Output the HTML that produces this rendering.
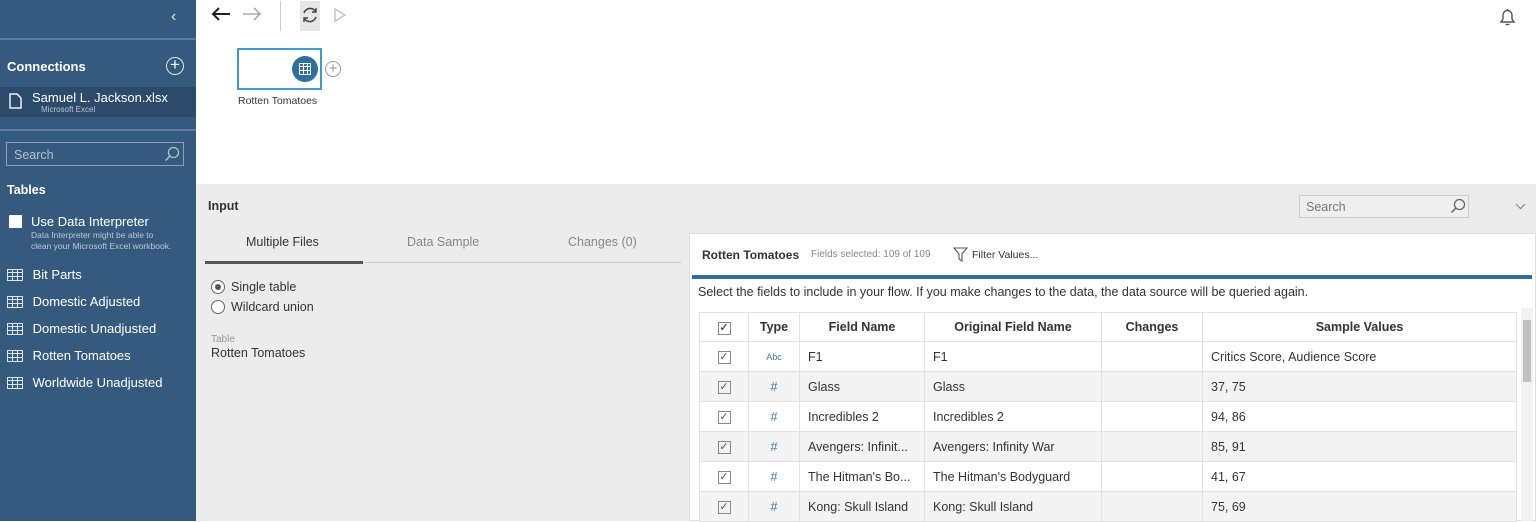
<!DOCTYPE html>
<html><head><style>
*{margin:0;padding:0;box-sizing:border-box}
body{width:1536px;height:521px;overflow:hidden;font-family:"Liberation Sans",sans-serif;background:#fff;position:relative;color:#333}
.a{position:absolute}
.sb{left:0;top:0;width:196px;height:521px;background:#365a7e;color:#fff}
.tb{font-size:13px;color:#fff}
.ic{display:inline-block;width:16px;height:12px;border:1.5px solid #dde6ef;background:repeating-linear-gradient(90deg,transparent 0 4px,#dde6ef 4px 5px),repeating-linear-gradient(0deg,transparent 0 3px,#dde6ef 3px 4px)}
td,th{border:1px solid #e2e2e2;height:30px;font-size:12.5px;padding:0 8px;white-space:nowrap;overflow:hidden}
th{font-weight:bold;height:29px}
tr:nth-child(odd) td{background:#f3f3f3}
.cb{display:inline-block;width:13px;height:13px;border:1px solid #888;font-size:11px;line-height:11px;text-align:center;color:#555}
</style></head><body>
<div class="a sb">
 <div class="a" style="left:171px;top:8px;font-size:16px;color:#dfe6ee">&#8249;</div>
 <div class="a" style="left:0;top:38px;width:196px;height:2px;background:#5b7b9c"></div>
 <div class="a" style="left:7px;top:59px;font-size:13px;font-weight:bold">Connections</div>
 <div class="a" style="left:166px;top:57px;width:18px;height:18px;border:1.5px solid #dfe6ee;border-radius:50%;text-align:center;line-height:14px;font-size:17px">+</div>
 <div class="a" style="left:0;top:87px;width:196px;height:30px;background:#2c4a6a"></div>
 <svg class="a" style="left:9px;top:93px" width="13" height="16"><path d="M1 1H8L12 5V15H1Z" fill="none" stroke="#eef" stroke-width="1.5"/></svg>
 <div class="a" style="left:32px;top:90px;font-size:13px">Samuel L. Jackson.xlsx</div>
 <div class="a" style="left:41px;top:105px;font-size:8px;color:#b8c7d6">Microsoft Excel</div>
 <div class="a" style="left:0;top:129px;width:196px;height:2px;background:#5b7b9c"></div>
 <div class="a" style="left:6px;top:142px;width:178px;height:24px;border:1px solid #8aa2bb"></div>
 <div class="a" style="left:14px;top:148px;font-size:12.5px;color:#b0c1d3">Search</div>
 <svg class="a" style="left:164px;top:146px" width="16" height="16"><circle cx="9.5" cy="6.5" r="5" fill="none" stroke="#b0c1d3" stroke-width="1.3"/><path d="M6 10L1.5 14.5" stroke="#b0c1d3" stroke-width="1.5"/></svg>
 <div class="a" style="left:7px;top:183px;font-size:12.5px;font-weight:bold">Tables</div>
 <div class="a" style="left:9px;top:215px;width:13px;height:13px;background:#fff"></div>
 <div class="a" style="left:31px;top:214px;font-size:13px">Use Data Interpreter</div>
 <div class="a" style="left:31px;top:230px;font-size:8.5px;color:#b8c7d6;line-height:11px">Data Interpreter might be able to<br>clean your Microsoft Excel workbook.</div>
 <div class="a tb" style="left:7px;top:269px"><span class="ic"></span> <span style="position:relative;top:-2px;left:6px">Bit Parts</span></div>
 <div class="a tb" style="left:7px;top:296px"><span class="ic"></span> <span style="position:relative;top:-2px;left:6px">Domestic Adjusted</span></div>
 <div class="a tb" style="left:7px;top:323px"><span class="ic"></span> <span style="position:relative;top:-2px;left:6px">Domestic Unadjusted</span></div>
 <div class="a tb" style="left:7px;top:350px"><span class="ic"></span> <span style="position:relative;top:-2px;left:6px">Rotten Tomatoes</span></div>
 <div class="a tb" style="left:7px;top:377px"><span class="ic"></span> <span style="position:relative;top:-2px;left:6px">Worldwide Unadjusted</span></div>
</div>
<!-- toolbar -->
<svg class="a" style="left:211px;top:6px" width="20" height="16"><path d="M19 8H2M8 2L2 8L8 14" fill="none" stroke="#222" stroke-width="2"/></svg>
<svg class="a" style="left:242px;top:6px" width="20" height="16"><path d="M1 8H18M12 2L18 8L12 14" fill="none" stroke="#aaa" stroke-width="1.6"/></svg>
<div class="a" style="left:280px;top:1px;width:1px;height:30px;background:#ccc"></div>
<div class="a" style="left:300px;top:1px;width:20px;height:30px;background:#e6e6e6"></div>
<svg class="a" style="left:301px;top:6px" width="18" height="18"><path d="M3 7A6.5 6.5 0 0 1 15 6M15 11A6.5 6.5 0 0 1 3 12" fill="none" stroke="#444" stroke-width="1.6"/><path d="M15 2V6H11M3 16V12H7" fill="none" stroke="#444" stroke-width="1.4"/></svg>
<svg class="a" style="left:334px;top:8px" width="12" height="14"><path d="M1 1L11 7L1 13Z" fill="none" stroke="#bbb" stroke-width="1.3"/></svg>
<svg class="a" style="left:1498px;top:7px" width="19" height="20"><path d="M3 15H16L14 12V8A4.5 4.5 0 0 0 5 8V12Z" fill="none" stroke="#555" stroke-width="1.4"/><path d="M7.5 17.5H11.5" stroke="#555" stroke-width="1.4"/><path d="M9.5 2V3.5" stroke="#555" stroke-width="1.4"/></svg>
<div class="a" style="left:237px;top:48px;width:85px;height:42px;border:2px solid #3c9ad6;background:#fff"></div>
<div class="a" style="left:292px;top:56px;width:26px;height:26px;border-radius:50%;background:#2f6f9f"></div>
<div class="a" style="left:299px;top:63px;width:12px;height:12px;border:1px solid #fff;background:repeating-linear-gradient(90deg,transparent 0 3px,#fff 3px 4px),repeating-linear-gradient(0deg,transparent 0 3px,#fff 3px 4px)"></div>
<div class="a" style="left:325px;top:61px;width:16px;height:16px;border:1px solid #999;border-radius:50%;text-align:center;line-height:13px;color:#999;font-size:15px">+</div>
<div class="a" style="left:238px;top:95px;font-size:10.5px">Rotten Tomatoes</div>
<!-- lower -->
<div class="a" style="left:196px;top:184px;width:1340px;height:337px;background:#ececec"></div>
<div class="a" style="left:208px;top:199px;font-size:12.5px;font-weight:bold">Input</div>
<div class="a" style="left:1299px;top:195px;width:170px;height:23px;border:1px solid #ccc;background:#efefef"></div>
<div class="a" style="left:1306px;top:200px;font-size:12.5px;color:#777">Search</div>
<svg class="a" style="left:1450px;top:198px" width="16" height="16"><circle cx="9.5" cy="6.5" r="5" fill="none" stroke="#666" stroke-width="1.3"/><path d="M6 10L1.5 14.5" stroke="#666" stroke-width="1.5"/></svg>
<svg class="a" style="left:1515px;top:203px" width="11" height="7"><path d="M1 1L5.5 5.5L10 1" fill="none" stroke="#888" stroke-width="1.2"/></svg>
<div class="a" style="left:246px;top:235px;font-size:12.5px">Multiple Files</div>
<div class="a" style="left:407px;top:235px;font-size:12.5px;color:#888">Data Sample</div>
<div class="a" style="left:568px;top:235px;font-size:12.5px;color:#888">Changes (0)</div>
<div class="a" style="left:205px;top:262px;width:476px;height:1px;background:#ccc"></div>
<div class="a" style="left:205px;top:261px;width:158px;height:3px;background:#555"></div>
<div class="a" style="left:211px;top:280px;width:14px;height:14px;border:1px solid #666;border-radius:50%;background:#fff"></div>
<div class="a" style="left:215px;top:284px;width:6px;height:6px;border-radius:50%;background:#555"></div>
<div class="a" style="left:231px;top:280px;font-size:12.5px">Single table</div>
<div class="a" style="left:211px;top:300px;width:14px;height:14px;border:1px solid #666;border-radius:50%;background:#fff"></div>
<div class="a" style="left:231px;top:300px;font-size:12.5px">Wildcard union</div>
<div class="a" style="left:211px;top:334px;font-size:10px;color:#999">Table</div>
<div class="a" style="left:211px;top:346px;font-size:12.5px">Rotten Tomatoes</div>
<div class="a" style="left:689px;top:233px;width:847px;height:288px;background:#fff;border:1px solid #ddd"></div>
<div class="a" style="left:702px;top:248px;font-size:12px;font-weight:bold">Rotten Tomatoes</div>
<div class="a" style="left:811px;top:249px;font-size:10px;color:#888">Fields selected: 109 of 109</div>
<svg class="a" style="left:953px;top:247px" width="15" height="15"><path d="M1 1H14L9 7V14L6 12V7Z" fill="none" stroke="#555" stroke-width="1.1"/></svg>
<div class="a" style="left:972px;top:249px;font-size:10.5px">Filter Values...</div>
<div class="a" style="left:692px;top:275px;width:840px;height:4px;background:#2f6f9f"></div>
<div class="a" style="left:698px;top:285px;font-size:12.5px">Select the fields to include in your flow. If you make changes to the data, the data source will be queried again.</div>
<div class="a" style="left:1521px;top:308px;width:12px;height:213px;background:#f1f1f1"></div>
<div class="a" style="left:1523px;top:320px;width:8px;height:62px;background:#c1c1c1"></div>
<table class="a" style="left:699px;top:312px;border-collapse:collapse;width:818px;table-layout:fixed">
<colgroup><col style="width:49px"><col style="width:51px"><col style="width:125px"><col style="width:177px"><col style="width:101px"><col></colgroup>
<tr><th style="background:#fff;text-align:center"><span class="cb">&#10003;</span></th><th>Type</th><th style="text-align:center">Field Name</th><th style="text-align:center">Original Field Name</th><th style="text-align:center">Changes</th><th style="text-align:center">Sample Values</th></tr>
<tr><td style="text-align:center"><span class="cb">&#10003;</span></td><td style="text-align:center;color:#3b77a8;font-size:9px">Abc</td><td>F1</td><td>F1</td><td></td><td>Critics Score, Audience Score</td></tr>
<tr><td style="text-align:center"><span class="cb">&#10003;</span></td><td style="text-align:center;color:#3b77a8">#</td><td>Glass</td><td>Glass</td><td></td><td>37, 75</td></tr>
<tr><td style="text-align:center"><span class="cb">&#10003;</span></td><td style="text-align:center;color:#3b77a8">#</td><td>Incredibles 2</td><td>Incredibles 2</td><td></td><td>94, 86</td></tr>
<tr><td style="text-align:center"><span class="cb">&#10003;</span></td><td style="text-align:center;color:#3b77a8">#</td><td>Avengers: Infinit...</td><td>Avengers: Infinity War</td><td></td><td>85, 91</td></tr>
<tr><td style="text-align:center"><span class="cb">&#10003;</span></td><td style="text-align:center;color:#3b77a8">#</td><td>The Hitman's Bo...</td><td>The Hitman's Bodyguard</td><td></td><td>41, 67</td></tr>
<tr><td style="text-align:center"><span class="cb">&#10003;</span></td><td style="text-align:center;color:#3b77a8">#</td><td>Kong: Skull Island</td><td>Kong: Skull Island</td><td></td><td>75, 69</td></tr>
</table>
</body></html>
